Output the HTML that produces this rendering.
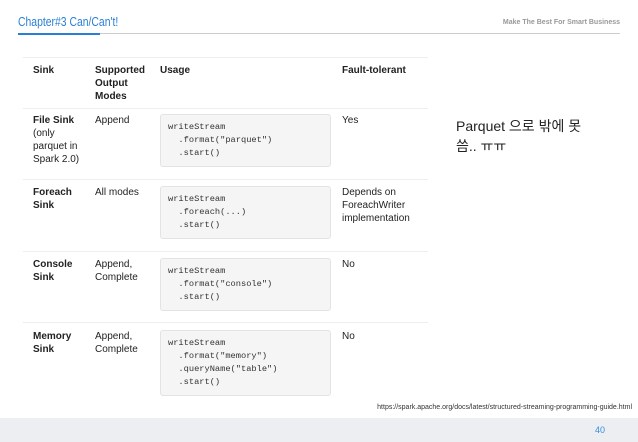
<!DOCTYPE html>
<html><head><meta charset="utf-8"><style>
*{margin:0;padding:0;box-sizing:border-box}
body{width:638px;height:442px;background:#fff;position:relative;overflow:hidden;font-family:"Liberation Sans","Noto Sans CJK KR",sans-serif;color:#222}
.a{position:absolute}
.t{font-size:10px;line-height:13px}
.b{font-weight:bold}
.hl{position:absolute;left:23px;width:405px;height:1px;background:#eee}
.code{position:absolute;left:160px;width:171px;background:#f5f5f5;border:1px solid #e3e3e3;border-radius:3px;font-family:"Liberation Mono",monospace;font-size:8.7px;line-height:13px;color:#333;padding:6px 7px;white-space:pre}
</style></head><body>
<div class="a" style="left:18px;top:14px;font-size:13px;color:#2a7fd4;transform:scaleX(0.8);transform-origin:0 0;white-space:nowrap">Chapter#3 Can/Can't!</div>
<div class="a" style="left:18px;top:33px;width:602px;height:1px;background:#ccc"></div>
<div class="a" style="left:18px;top:33px;width:82px;height:2px;background:#2a7fd4"></div>
<div class="a" style="right:18px;top:19px;font-size:7px;color:#999;font-weight:bold">Make The Best For Smart Business</div>

<div class="hl" style="top:57px"></div>
<div class="hl" style="top:108px"></div>
<div class="hl" style="top:179px"></div>
<div class="hl" style="top:251px"></div>
<div class="hl" style="top:322px"></div>

<div class="a t b" style="left:33px;top:64px">Sink</div>
<div class="a t b" style="left:95px;top:64px">Supported<br>Output<br>Modes</div>
<div class="a t b" style="left:160px;top:64px">Usage</div>
<div class="a t b" style="left:342px;top:64px">Fault-tolerant</div>

<div class="a t" style="left:33px;top:114px"><b>File Sink</b><br>(only<br>parquet in<br>Spark 2.0)</div>
<div class="a t" style="left:95px;top:114px">Append</div>
<div class="code" style="top:114px;height:53px">writeStream
  .format("parquet")
  .start()</div>
<div class="a t" style="left:342px;top:114px">Yes</div>

<div class="a t b" style="left:33px;top:186px">Foreach<br>Sink</div>
<div class="a t" style="left:95px;top:186px">All modes</div>
<div class="code" style="top:186px;height:53px">writeStream
  .foreach(...)
  .start()</div>
<div class="a t" style="left:342px;top:186px">Depends on<br>ForeachWriter<br>implementation</div>

<div class="a t b" style="left:33px;top:258px">Console<br>Sink</div>
<div class="a t" style="left:95px;top:258px">Append,<br>Complete</div>
<div class="code" style="top:258px;height:53px">writeStream
  .format("console")
  .start()</div>
<div class="a t" style="left:342px;top:258px">No</div>

<div class="a t b" style="left:33px;top:330px">Memory<br>Sink</div>
<div class="a t" style="left:95px;top:330px">Append,<br>Complete</div>
<div class="code" style="top:330px;height:66px">writeStream
  .format("memory")
  .queryName("table")
  .start()</div>
<div class="a t" style="left:342px;top:330px">No</div>

<div class="a" style="left:456px;top:116px;font-size:14px;line-height:20px;color:#222">Parquet 으로 밖에 못<br>씀.. ㅠㅠ</div>

<div class="a" style="right:6px;top:404px;font-size:7px;color:#333">https://spark.apache.org/docs/latest/structured-streaming-programming-guide.html</div>
<div class="a" style="left:0;top:418px;width:638px;height:24px;background:#eceef1"></div>
<div class="a" style="left:595px;top:425px;font-size:9px;color:#3a8ee0">40</div>
</body></html>
